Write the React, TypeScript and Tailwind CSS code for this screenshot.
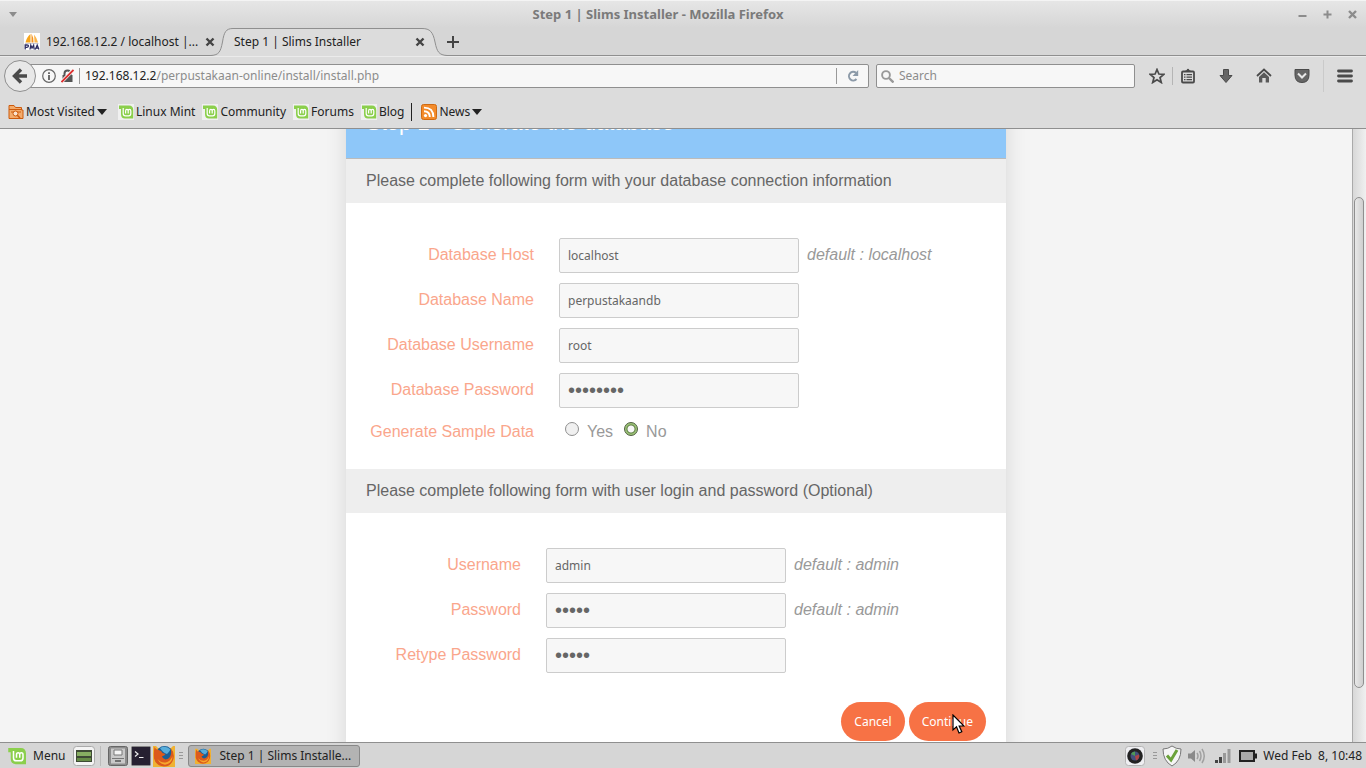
import { useState } from 'react'
import type { ReactNode } from 'react'

function CloseIcon() {
  return (
    <svg width="10" height="10" viewBox="0 0 10 10">
      <path d="M1.5 1.5 8.5 8.5 M8.5 1.5 1.5 8.5" stroke="#444" strokeWidth="2.4" />
    </svg>
  )
}

function PmaIcon() {
  return (
    <svg width="16" height="17" viewBox="0 0 16 17">
      <rect width="16" height="17" fill="#fff" />
      <path d="M6.5 1 V9.500 H1.500 Q2.500 4.500 6.500 1Z" fill="#f8a51b" />
      <path d="M7.500 .5 Q9.500 4 9.500 9.500 H7.500Z" fill="#f6921e" />
      <path d="M10 1.500 Q13 5 14 9.500 H10.500Z" fill="#fbb54a" />
      <path d="M1 10.500 H14.500" stroke="#c9c9d8" />
      <path d="M1.200 16.500 V12 H3 Q4.600 12 4.400 13.200 Q4.200 14.400 2.800 14.400 H1.200 M6 16.500 L6.800 12.200 L8 15 L9.600 12.200 L10.200 16.500 M11.300 16.500 L13.200 12.200 L14.900 16.500 M12 15.200 H14.400" fill="none" stroke="#2d2d63" strokeWidth="1.3" />
    </svg>
  )
}

function MintIcon({ size = 16, plain = false }: { size?: number; plain?: boolean }) {
  return (
    <svg width={size} height={size} viewBox="0 0 16 16">
      <rect width="16" height="16" fill={plain ? 'none' : '#f0f0f0'} />
      <path d="M1 1.500 H11 Q15.200 1.500 15.200 6 V14.500 H7 Q3 14.500 3 10 V5 H1Z" fill="#8bcf4c" />
      <path d="M5.2 4 V9.5 Q5.2 11.8 7.5 11.8 H10.6 Q12.8 11.8 12.8 9.5 V7 Q12.8 5.4 11.5 5.4 Q10.2 5.4 10.2 7 V9.4 M10.2 7 Q10.2 5.4 8.9 5.4 Q7.6 5.4 7.6 7 V9.4" fill="none" stroke="#fff" strokeWidth="1.2" />
    </svg>
  )
}

function FolderIcon() {
  return (
    <svg width="16" height="16" viewBox="0 0 16 16">
      <path d="M1 14.5 V1.5 H6 L7.5 3.5 H13.5 V6 H15 V14.5Z" fill="#f4ac6c" stroke="#cc5a0c" />
      <path d="M1 5.5 H13 M3 8 H13" stroke="#cc5a0c" />
      <circle cx="7.5" cy="9.5" r="2.5" fill="#fbe3cd" stroke="#cc5a0c" />
      <path d="M9.3 11.3 12 14" stroke="#cc5a0c" strokeWidth="1.6" />
    </svg>
  )
}

function RssIcon() {
  return (
    <svg width="16" height="16" viewBox="0 0 16 16">
      <rect x=".5" y=".5" width="15" height="15" rx="2" fill="#f38b2b" stroke="#cf6a12" />
      <circle cx="4.5" cy="11.6" r="1.6" fill="#fff" />
      <path d="M3 7.2 Q8.8 7.2 8.8 13 M3 3.6 Q12.4 3.6 12.4 13" fill="none" stroke="#fff" strokeWidth="1.9" />
    </svg>
  )
}

function FirefoxIcon({ size = 16 }: { size?: number }) {
  return (
    <svg width={size} height={size} viewBox="0 0 22 22">
      <path d="M0 1 H3 L5 3 H18 L20 1 H22 V22 H0Z" fill="#f0b232" />
      <circle cx="11.500" cy="9.500" r="8.500" fill="#1a5f96" />
      <path d="M7 3 Q13 0 17.500 4.500 Q16 7 14 9 Q10 8 7 3Z" fill="#58aedb" />
      <path d="M1.500 2 Q3 5 5.500 5 Q8.500 5.500 9.500 8 L12.500 9 Q11.500 11 9 11.200 Q9.500 14 12.500 14.500 Q17 14 18 9 Q18.500 6 17.500 3 Q22 8 20.500 14 Q18 21.500 11 21.500 Q3 21 1 13.500 Q.5 7 1.500 2Z" fill="#dc5a1c" />
      <path d="M4.500 14 Q8 18 12.500 17.500 Q17.500 16.500 19.500 11 Q19.500 18.500 12 19.800 Q6.500 19 4.500 14Z" fill="#f7a62c" />
    </svg>
  )
}

function Caret() {
  return (
    <svg width="10" height="6" viewBox="0 0 10 6">
      <path d="M0 0 H10 L5 6Z" fill="#222" />
    </svg>
  )
}

function TitleBar() {
  return (
    <header className="flex h-7 shrink-0 items-center border-t border-[#f4f4f4] bg-linear-to-b from-[#e6e6e6] to-[#d6d6d6] pr-[9px] pl-2">
      <button aria-label="Window menu">
        <svg width="10" height="6" viewBox="0 0 10 6">
          <path d="M1 0 H9 L5 5Z" fill="#8c8c8c" />
        </svg>
      </button>
      <h1 className="flex-1 text-center text-[13px] font-bold text-[#7a7a7a]">Step 1 | Slims Installer - Mozilla Firefox</h1>
      <div className="flex gap-4">
        <button aria-label="Minimize">
          <svg width="9" height="9" viewBox="0 0 9 9"><path d="M.5 6 H8.5" stroke="#8c8c8c" strokeWidth="2" /></svg>
        </button>
        <button aria-label="Maximize">
          <svg width="9" height="9" viewBox="0 0 9 9"><path d="M.5 4.5 H8.5 M4.5 .5 V8.5" stroke="#8c8c8c" strokeWidth="2" /></svg>
        </button>
        <button aria-label="Close">
          <svg width="9" height="9" viewBox="0 0 9 9"><path d="M1 1 8 8 M8 1 1 8" stroke="#8c8c8c" strokeWidth="2.4" /></svg>
        </button>
      </div>
    </header>
  )
}

function TabStrip() {
  return (
    <div className="flex h-7 shrink-0 border-b border-[#8f8f8f] bg-[#d6d6d6] pl-6 text-[12px] text-[#222]">
      <div className="flex w-[191px] items-center">
        <PmaIcon />
        <span className="ml-[6px] flex-1 whitespace-nowrap">192.168.12.2 / localhost |...</span>
        <button aria-label="Close tab"><CloseIcon /></button>
      </div>
      <div className="relative flex w-[225px] items-center">
        {/* curved outline of the selected tab */}
        <svg className="absolute top-0 -left-1" width="236" height="28" viewBox="0 0 236 28">
          <path d="M0 27.500 C8 27 9.500 24 11.500 14 C13 4 15 .5 22 .5 H211 C219 .5 222 4 224 14 C226 24 228 27 236 27.500 V28 H0Z" fill="#dcdcdc" />
          <path d="M0 27.500 C8 27 9.500 24 11.500 14 C13 4 15 .5 22 .5 H211 C219 .5 222 4 224 14 C226 24 228 27 236 27.500" fill="none" stroke="#8f8f8f" />
        </svg>
        <span className="relative ml-[19px] flex-1 whitespace-nowrap">Step 1 | Slims Installer</span>
        <button aria-label="Close tab" className="relative mr-[15px]"><CloseIcon /></button>
      </div>
      <button aria-label="New tab" className="ml-[7px]">
        <svg width="12" height="12" viewBox="0 0 12 12"><path d="M0 6 H12 M6 0 V12" stroke="#444" strokeWidth="2" /></svg>
      </button>
    </div>
  )
}

function NavBar() {
  return (
    <div className="flex h-10 shrink-0 items-center border-t border-[#ebebeb] bg-[#dcdcdc] pb-px pl-1">
      <button aria-label="Back" className="relative z-10 flex size-8 items-center justify-center rounded-full border border-[#8f8f8f] bg-[#e8e8e8]">
        <svg width="16" height="16" viewBox="0 0 16 16">
          <path d="M9 1.500 L2.500 8 L9 14.500 M3 8 H15" fill="none" stroke="#4a4a4a" strokeWidth="3.4" />
        </svg>
      </button>
      <div className="-ml-2 flex h-6 flex-1 items-center rounded-r-[2px] border border-[#8f8f8f] bg-[#f7f7f7] pl-[13px]">
        <svg width="14" height="14" viewBox="0 0 14 14">
          <circle cx="7" cy="7" r="6.300" fill="none" stroke="#666" strokeWidth="1.2" />
          <path d="M7 6 V11 M7 3.200 V5" stroke="#555" strokeWidth="1.7" />
        </svg>
        <svg className="ml-[5px]" width="13" height="14" viewBox="0 0 13 14">
          <path d="M3.500 7 V4.500 Q3.500 1.500 6.500 1.500 Q9.500 1.500 9.500 4.500 V7" fill="none" stroke="#555" strokeWidth="2" />
          <rect x="1.500" y="6" width="10" height="7" fill="#555" />
          <path d="M.5 13 12 1" stroke="#f7f7f7" strokeWidth="3.4" />
          <path d="M.5 13 12.500 1" stroke="#dc3030" strokeWidth="1.8" />
        </svg>
        <span className="mx-[5px] h-4 w-px bg-[#999]" />
        <a href="#address" className="flex-1 whitespace-nowrap text-[12px] text-[#8c8c8c]">
          <span className="text-[#222]">192.168.12.2</span>/perpustakaan-online/install/install.php
        </a>
        <button aria-label="Reload" className="flex h-4 w-8 items-center justify-center border-l border-[#999]">
          <svg width="12" height="12" viewBox="0 0 12 12">
            <path d="M9.500 9 A4.300 4.300 0 1 1 9 2.800" fill="none" stroke="#8c9aa8" strokeWidth="2" />
            <path d="M11.200 0 V6 H5.600Z" fill="#8c9aa8" />
          </svg>
        </button>
      </div>
      <label className="ml-[7px] flex h-6 w-[259px] items-center gap-[5px] rounded-[2px] border border-[#8f8f8f] bg-[#f7f7f7] pl-1">
        <svg width="13" height="13" viewBox="0 0 13 13">
          <circle cx="5" cy="5" r="3.900" fill="none" stroke="#999" strokeWidth="1.900" />
          <path d="M8 8 12.500 12.500" stroke="#999" strokeWidth="2.400" />
        </svg>
        <input aria-label="Search" placeholder="Search" className="min-w-0 flex-1 bg-transparent text-[12px] outline-none placeholder:text-[#8c8c8c]" />
      </label>
      <div className="flex shrink-0 items-center pr-[13px] pl-[14px]">
        <button aria-label="Bookmark this page">
          <svg width="16" height="16" viewBox="0 0 16 16">
            <path d="M8 1.500 L9.900 6 L14.800 6.300 L11 9.500 L12.300 14.500 L8 11.800 L3.700 14.500 L5 9.500 L1.200 6.300 L6.100 6Z" fill="none" stroke="#4a4a4a" strokeWidth="1.700" />
          </svg>
        </button>
        <span className="ml-[7px] h-[18px] w-px bg-[#b5b5b5]" />
        <button aria-label="Bookmarks" className="ml-2">
          <svg width="14" height="16" viewBox="0 0 14 16">
            <rect x="1" y="3.500" width="12" height="11" rx="1" fill="none" stroke="#4a4a4a" strokeWidth="1.800" />
            <path d="M3.500 4 Q4 2.500 5.500 2.200 Q7 -.5 8.500 2.200 Q10 2.500 10.500 4Z" fill="#4a4a4a" />
            <path d="M3 6.700 H4.500 M5.500 6.700 H11 M3 9.200 H4.500 M5.500 9.200 H11 M3 11.700 H4.500 M5.500 11.700 H11" stroke="#4a4a4a" strokeWidth="1.200" />
          </svg>
        </button>
        <button aria-label="Downloads" className="ml-6">
          <svg width="14" height="16" viewBox="0 0 14 16">
            <path d="M4.500 1.500 H9.500 V7.500 H13 L7 14.500 L1 7.500 H4.500Z" fill="#666" stroke="#4a4a4a" />
          </svg>
        </button>
        <button aria-label="Home" className="ml-[23px]">
          <svg width="16" height="16" viewBox="0 0 16 16">
            <path d="M1 8 8 1.500 15 8" fill="none" stroke="#4a4a4a" strokeWidth="1.800" />
            <path d="M3 14.500 V9 L8 4.300 L13 9 V14.500 H9.700 V10 H6.300 V14.500Z" fill="#5a5a5a" />
          </svg>
        </button>
        <button aria-label="Pocket" className="ml-[22px]">
          <svg width="16" height="16" viewBox="0 0 16 16">
            <path d="M1 1.500 H15 V7 Q15 14.500 8 14.500 Q1 14.500 1 7Z" fill="#666" stroke="#4a4a4a" />
            <path d="M4 5.500 8 9.500 12 5.500" fill="none" stroke="#e8e8e8" strokeWidth="2" />
          </svg>
        </button>
        <span className="ml-[13px] h-8 w-px bg-[#cacaca]" />
        <button aria-label="Open menu" className="ml-[13px]">
          <svg width="16" height="14" viewBox="0 0 16 14">
            <path d="M1.500 2 H14.500 M1.500 7 H14.500 M1.500 12 H14.500" stroke="#4a4a4a" strokeWidth="2.800" strokeLinecap="round" />
          </svg>
        </button>
      </div>
    </div>
  )
}

function Bookmark({ icon, label, menu }: { icon: ReactNode; label: string; menu?: boolean }) {
  return (
    <a href="#bookmark" className="flex items-center gap-[2px] whitespace-nowrap">
      {icon}
      {label}
      {menu && <span className="mr-1"><Caret /></span>}
    </a>
  )
}

function BookmarksBar() {
  return (
    <nav className="flex h-[33px] shrink-0 items-center gap-[7px] border-b border-[#8f8f8f] bg-[#dcdcdc] pl-2 text-[12px] text-[#222]">
      <Bookmark icon={<FolderIcon />} label="Most Visited" menu />
      <Bookmark icon={<MintIcon />} label="Linux Mint" />
      <Bookmark icon={<MintIcon />} label="Community" />
      <Bookmark icon={<MintIcon />} label="Forums" />
      <Bookmark icon={<MintIcon />} label="Blog" />
      <span className="mr-[2px] h-[18px] w-px bg-[#222]" />
      <Bookmark icon={<RssIcon />} label="News" menu />
    </nav>
  )
}

type FieldProps = {
  id: string
  label: string
  value: string
  type?: string
  hint?: string
  labelWidth: string
}

function Field({ id, label, value, type = 'text', hint, labelWidth }: FieldProps) {
  const [text, setText] = useState(value)
  const font = type === 'password' ? "font-['Liberation_Sans',sans-serif] text-[20px]" : "font-['Noto_Sans',sans-serif] text-[12px]"
  return (
    <div className="flex">
      <label htmlFor={id} className={`${labelWidth} pt-[5px] text-right text-[#faa68c]`}>{label}</label>
      <input
        id={id}
        type={type}
        value={text}
        onChange={(e) => setText(e.target.value)}
        className={`${font} ml-[25px] h-[35px] w-60 rounded-[2px] border border-[#ccc] bg-[#f7f7f7] px-2 text-[#666] outline-none`}
      />
      {hint && <em className="ml-2 pt-[5px] text-[#999]">{hint}</em>}
    </div>
  )
}

function SectionTitle({ children }: { children: ReactNode }) {
  return <h3 className="h-11 bg-[#eee] px-5 pt-[10px] text-[#666]">{children}</h3>
}

function InstallerCard() {
  const [sample, setSample] = useState('no')
  const radio = "mt-1 size-[14px] appearance-none rounded-full border border-[#8f8f8f] bg-[#f0f0f0] checked:border-[#4f5f40] checked:bg-[radial-gradient(circle,#f7f7f7_3px,#5f7f45_4px,#9cc377_5px)]"
  return (
    <form
      onSubmit={(e) => e.preventDefault()}
      className="mx-auto -mt-6 w-[660px] bg-white font-['Liberation_Sans',Arial,sans-serif] text-[16px] leading-6 shadow-[0_0_20px_rgba(0,0,0,0.12)]"
    >
      <h2 className="h-[54px] border-b border-[#bbb] bg-[#8ec7f9] px-5 pt-[6px] text-[22px] leading-6 font-normal text-white">
        Step 1 - Generate the database
      </h2>
      <SectionTitle>Please complete following form with your database connection information</SectionTitle>
      <div className="flex flex-col gap-[10px] pt-[35px] pb-[25px]">
        <Field id="dbhost" label="Database Host" value="localhost" hint="default : localhost" labelWidth="w-[188px]" />
        <Field id="dbname" label="Database Name" value="perpustakaandb" labelWidth="w-[188px]" />
        <Field id="dbuser" label="Database Username" value="root" labelWidth="w-[188px]" />
        <Field id="dbpass" label="Database Password" value="12345678" type="password" labelWidth="w-[188px]" />
        <fieldset className="flex text-[#999]">
          <legend className="float-left w-[188px] pt-[2px] text-right text-[#faa68c]">Generate Sample Data</legend>
          <label className="ml-[31px] flex gap-2">
            <input type="radio" name="sample" className={radio} checked={sample === 'yes'} onChange={() => setSample('yes')} />
            <span className="pt-[2px]">Yes</span>
          </label>
          <label className="ml-[11px] flex gap-2">
            <input type="radio" name="sample" className={radio} checked={sample === 'no'} onChange={() => setSample('no')} />
            <span className="pt-[2px]">No</span>
          </label>
        </fieldset>
      </div>
      <SectionTitle>Please complete following form with user login and password (Optional)</SectionTitle>
      <div className="flex flex-col gap-[10px] pt-[35px]">
        <Field id="user" label="Username" value="admin" hint="default : admin" labelWidth="w-[175px]" />
        <Field id="pass" label="Password" value="admin" type="password" hint="default : admin" labelWidth="w-[175px]" />
        <Field id="retype" label="Retype Password" value="admin" type="password" labelWidth="w-[175px]" />
      </div>
      <div className="flex justify-end gap-1 px-5 pt-[29px] pb-5 font-['Noto_Sans',sans-serif] text-[12px] text-white">
        <button type="button" className="h-[39px] rounded-full bg-[#f77245] px-[13px]">Cancel</button>
        <button type="submit" className="relative h-[39px] rounded-full bg-[#f77245] px-[13px]">
          Continue
          {/* mouse pointer */}
          <svg className="absolute top-3 left-[43px]" width="13" height="21" viewBox="0 0 13 21">
            <path d="M1 1 V16 L4.500 12.800 L7 19 L9.800 17.800 L7.200 12 H12Z" fill="#fff" stroke="#000" strokeWidth="1.200" />
          </svg>
        </button>
      </div>
    </form>
  )
}

function Grip() {
  return (
    <svg width="4" height="9" viewBox="0 0 4 9">
      <path d="M0 1.500 H4 M0 4.500 H4 M0 7.500 H4" stroke="#999" />
    </svg>
  )
}

function Taskbar() {
  return (
    <footer className="flex h-[26px] shrink-0 items-center border-t border-[#8f8f8f] bg-[#d6d6d6] pr-1 pl-[7px] text-[12px] text-[#222]">
      <button className="flex items-center gap-[6px]">
        <MintIcon size={20} plain />
        Menu
      </button>
      <button aria-label="Show desktop" className="ml-2">
        <svg width="22" height="20" viewBox="0 0 22 20">
          <rect x=".5" y=".5" width="21" height="19" rx="3" fill="#f4f4f4" stroke="#aaa" />
          <rect x="3" y="4" width="16" height="12" fill="#3e4a35" />
          <path d="M4 6 H18 V10 H4Z" fill="#87ae62" />
          <path d="M4 12 H18 V15 H4Z" fill="#668c46" />
        </svg>
      </button>
      <span className="mr-[6px] ml-[5px] h-5 w-px bg-[#bbb]" />
      <div className="flex items-center gap-[2px]">
        <button aria-label="Files">
          <svg width="22" height="20" viewBox="0 0 22 20">
            <rect x="1.500" y=".5" width="19" height="19" rx="2" fill="#8c8c8c" stroke="#666" />
            <rect x="4" y="2.500" width="14" height="15" fill="#c9c9c9" />
            <path d="M7 4 H15 V9 H7Z" fill="#f4f4f4" stroke="#777" />
            <path d="M5 12.500 H17" stroke="#777" />
            <path d="M8 15 H14" stroke="#555" strokeWidth="1.500" />
          </svg>
        </button>
        <button aria-label="Terminal">
          <svg width="20" height="20" viewBox="0 0 20 20">
            <rect x=".5" y=".5" width="19" height="19" rx="1" fill="#262031" stroke="#888" />
            <path d="M4 5.500 7 8 4 10.500 M8 11.500 H12.500" fill="none" stroke="#eee" strokeWidth="1.200" />
          </svg>
        </button>
        <button aria-label="Firefox"><FirefoxIcon size={22} /></button>
      </div>
      <span className="ml-1"><Grip /></span>
      <button className="ml-[5px] flex h-[22px] w-[172px] items-center gap-2 rounded-[3px] border border-[#888] bg-[#b3b3b3] pl-[6px] whitespace-nowrap">
        <FirefoxIcon />
        Step 1 | Slims Installe...
      </button>
      <div className="ml-auto flex items-center">
        <svg width="20" height="20" viewBox="0 0 20 20">
          <rect x=".5" y=".5" width="19" height="19" rx="3" fill="#efeff2" stroke="#b5b5b5" />
          <circle cx="10" cy="10" r="7.800" fill="#222" />
          <circle cx="10" cy="10" r="4.500" fill="#43507c" />
          <path d="M10 10 6 8 A4.500 4.500 0 0 1 10 5.500Z" fill="#4f9a55" />
          <path d="M10 10 14 8.500 A4.500 4.500 0 0 1 11 14.400Z" fill="#b04545" />
        </svg>
        <span className="ml-2"><Grip /></span>
        <svg className="ml-[5px]" width="20" height="22" viewBox="0 0 20 22">
          <path d="M10 1 Q14 4 19 4 Q19 16 10 21 Q1 16 1 4 Q6 4 10 1Z" fill="#f5f5f5" stroke="#777" />
          <path d="M5 10.500 9 15 15 5" fill="none" stroke="#6ba23a" strokeWidth="3" />
        </svg>
        <svg className="ml-[6px]" width="18" height="16" viewBox="0 0 18 16">
          <path d="M0 5.500 H3 L7 2 V14 L3 10.500 H0Z" fill="#8a8a8a" />
          <path d="M9 5 Q11 8 9 11 M11.500 3 Q14.500 8 11.500 13 M14 1 Q18.500 8 14 15" fill="none" stroke="#a0a0a0" strokeWidth="1.500" />
        </svg>
        <svg className="ml-[9px]" width="16" height="14" viewBox="0 0 16 14">
          <path d="M0 11 H3 V14 H0Z M4 8 H7 V14 H4Z" fill="#444" />
          <path d="M8 4 H11 V14 H8Z M12.500 0 H15.500 V14 H12.500Z" fill="#999" />
        </svg>
        <svg className="ml-2" width="18" height="12" viewBox="0 0 18 12">
          <rect x="1" y="1" width="14" height="10" fill="#aaa" stroke="#222" strokeWidth="2" />
          <path d="M15 3.500 H18 V8.500 H15Z" fill="#222" />
        </svg>
        <time className="ml-[6px] whitespace-pre">Wed Feb  8, 10:48</time>
      </div>
    </footer>
  )
}

export default function App() {
  return (
    <div className="flex h-screen flex-col overflow-hidden font-['Noto_Sans',sans-serif]">
      <TitleBar />
      <TabStrip />
      <NavBar />
      <BookmarksBar />
      <div className="flex min-h-0 flex-1">
        <main className="min-w-0 flex-1 overflow-hidden bg-[#f4f4f4]">
          <InstallerCard />
        </main>
        {/* scrollbar */}
        <div className="w-[14px] border-l border-[#aaa] bg-linear-to-r from-[#d8d8d8] to-[#f0f0f0] px-px pt-[68px]">
          <div className="h-[491px] w-[10px] rounded-full border border-[#8f8f8f] bg-linear-to-r from-[#e8e8e8] to-[#cfcfcf]" />
        </div>
      </div>
      <Taskbar />
    </div>
  )
}
